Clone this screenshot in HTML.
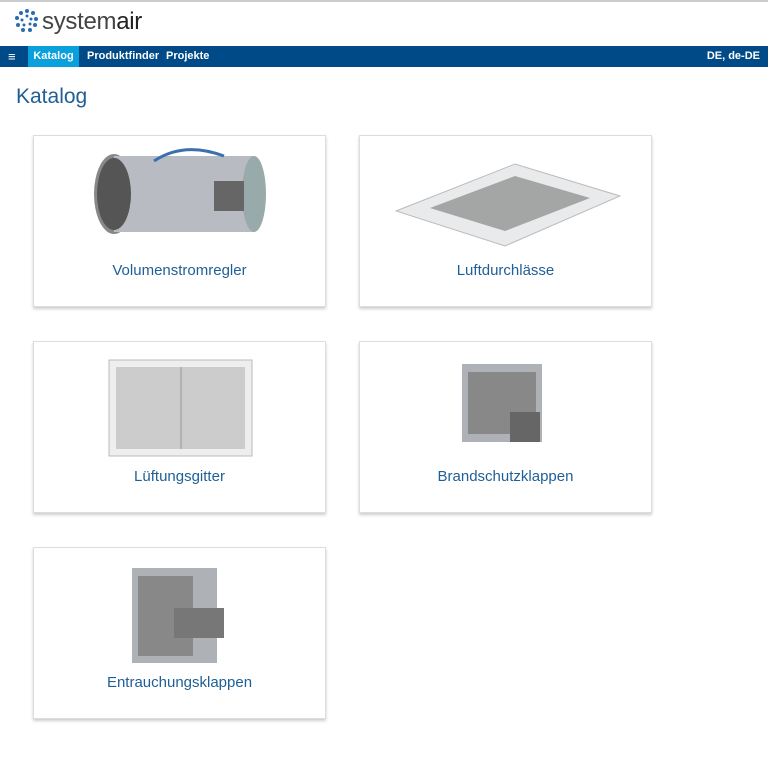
<!DOCTYPE html>
<html><head><meta charset="utf-8"><style>
*{margin:0;padding:0;box-sizing:border-box}
body{width:768px;height:768px;background:#fff;font-family:"Liberation Sans",sans-serif;position:relative;overflow:hidden}
.top{position:absolute;left:0;top:0;width:768px;height:2px;background:#ccc}
.logo{position:absolute;left:42px;top:8px;font-size:24px;color:#444;letter-spacing:-0.3px}
.logo b{font-weight:normal;color:#222}
.nav{position:absolute;left:0;top:46px;width:768px;height:21px;background:#004b87;color:#fff;font-size:11px;font-weight:bold}
.nav span{position:absolute;top:0;line-height:21px}
.h1{position:absolute;left:16px;top:85px;font-size:21px;color:#1f5f95}
.card{position:absolute;width:293px;height:172px;background:#fff;border:1px solid #ddd;box-shadow:0 2px 3px rgba(0,0,0,.2)}
.card .t{position:absolute;left:0;right:0;top:126px;text-align:center;color:#1f5f95;font-size:15px}
.card svg{position:absolute;left:0;top:0}
</style></head><body>
<div class="top"></div>
<svg style="position:absolute;left:14px;top:8px" width="26" height="26" viewBox="0 0 26 26">
<g fill="#2b6cb0">
<circle cx="13" cy="3" r="2"/><circle cx="19" cy="5" r="2"/><circle cx="22" cy="11" r="2"/><circle cx="21" cy="17" r="2"/><circle cx="16" cy="22" r="2"/><circle cx="9" cy="22" r="2"/><circle cx="4" cy="17" r="2"/><circle cx="3" cy="10" r="2"/><circle cx="7" cy="5" r="2"/>
<circle cx="13" cy="8" r="1.5"/><circle cx="17" cy="11" r="1.5"/><circle cx="16" cy="16" r="1.5"/><circle cx="10" cy="17" r="1.5"/><circle cx="8" cy="12" r="1.5"/>
</g></svg>
<div class="logo">system<b>air</b></div>
<div class="nav">
<span style="left:8px;font-size:13px">≡</span>
<span style="left:28px;width:51px;background:#0aa0dc;text-align:center">Katalog</span>
<span style="left:87px">Produktfinder</span>
<span style="left:166px">Projekte</span>
<span style="right:8px">DE, de-DE</span>
</div>
<div class="h1">Katalog</div>

<div class="card" style="left:33px;top:135px">
<svg width="293" height="120"><ellipse cx="80" cy="58" rx="20" ry="40" fill="#888"/><rect x="80" y="20" width="140" height="76" fill="#b8bcc2"/><ellipse cx="220" cy="58" rx="12" ry="38" fill="#9aa"/><ellipse cx="80" cy="58" rx="17" ry="36" fill="#555"/><rect x="180" y="45" width="30" height="30" fill="#666"/><path d="M120 25 Q150 5 190 20" stroke="#3a6fb0" stroke-width="3" fill="none"/></svg>
<div class="t">Volumenstromregler</div></div>

<div class="card" style="left:359px;top:135px">
<svg width="293" height="120"><polygon points="36,75 155,28 260,60 145,110" fill="#e8eaec" stroke="#bbb"/><polygon points="70,72 155,40 230,62 145,95" fill="#777" opacity=".6"/></svg>
<div class="t">Luftdurchlässe</div></div>

<div class="card" style="left:33px;top:341px">
<svg width="293" height="120"><rect x="75" y="18" width="143" height="96" fill="#eee" stroke="#bbb"/><rect x="82" y="25" width="129" height="82" fill="#ccc"/><line x1="147" y1="25" x2="147" y2="107" stroke="#999"/></svg>
<div class="t">Lüftungsgitter</div></div>

<div class="card" style="left:359px;top:341px">
<svg width="293" height="120"><rect x="102" y="22" width="80" height="78" fill="#aeb2b6"/><rect x="108" y="30" width="68" height="62" fill="#888"/><rect x="150" y="70" width="30" height="30" fill="#666"/></svg>
<div class="t">Brandschutzklappen</div></div>

<div class="card" style="left:33px;top:547px">
<svg width="293" height="120"><rect x="98" y="20" width="85" height="95" fill="#aeb2b6"/><rect x="104" y="28" width="55" height="80" fill="#888"/><rect x="140" y="60" width="50" height="30" fill="#777"/></svg>
<div class="t">Entrauchungsklappen</div></div>
</body></html>
